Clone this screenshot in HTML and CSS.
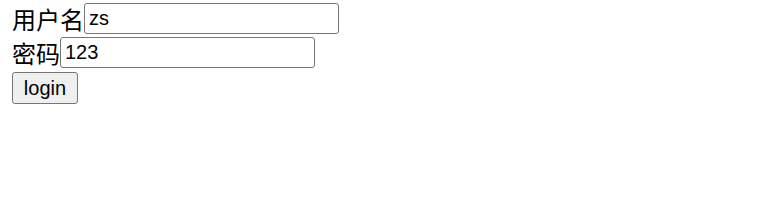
FILE: index.html
```html
<!DOCTYPE html>
<html lang="zh">
  <head>
    <meta charset="UTF-8" />
    <title>login</title>
    <link rel="stylesheet" href="styles.css">
  </head>
  <body>
    <form class="login-form">
      <div class="row">用户名<input type="text" value="zs" class="field" /></div>
      <div class="row">密码<input type="text" value="123" class="field" /></div>
      <button type="button" class="login-btn">login</button>
    </form>
  </body>
</html>
```

FILE: styles.css
```css
body {
  margin: 0 12px;
  font-family: "Liberation Sans", "Noto Sans CJK SC", sans-serif;
  font-size: 24px;
  color: #000;
  background: #fff;
}

.login-form {
  padding-top: 1px;
}

.row {
  display: flex;
  align-items: center;
  height: 34px;
}

.field {
  box-sizing: border-box;
  width: 255px;
  height: 31px;
  margin: 0;
  padding: 1px 4px;
  border: 1px solid #767676;
  border-radius: 3px;
  font-family: "Liberation Sans", sans-serif;
  font-size: 20px;
  color: #000;
}

.login-btn {
  box-sizing: border-box;
  margin-top: 3px;
  width: 66px;
  height: 32px;
  padding: 0 9px;
  background: #efefef;
  border: 1px solid #767676;
  border-radius: 3px;
  font-family: "Liberation Sans", sans-serif;
  font-size: 20px;
  color: #000;
}
```
